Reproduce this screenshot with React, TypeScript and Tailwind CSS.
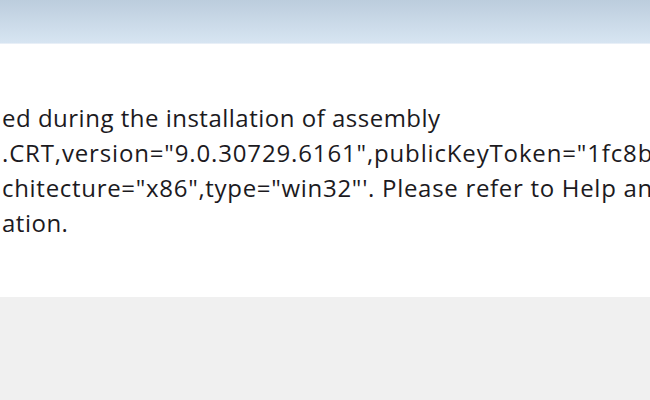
import { JSX } from "react"

const lines = [
    { text: "ed during the installation of assembly", track: "tracking-[0.5px]" },
    { text: ".CRT,version=\"9.0.30729.6161\",publicKeyToken=\"1fc8b3b9a1e18e3b\"", track: "tracking-[0.85px]" },
    { text: "chitecture=\"x86\",type=\"win32\"'. Please refer to Help and Support for more", track: "tracking-[0.7px]" },
    { text: "ation.", track: "tracking-[0.5px]" },
]

export default function App(): JSX.Element {
    return (
        <div id="dialog" className="w-[650px] h-[400px] flex flex-col overflow-hidden bg-white">
            <TitleBar />
            <Message />
            <ButtonArea />
        </div>
    )
}

function TitleBar(): JSX.Element {
    return (
        <div className="h-[44px] shrink-0 flex flex-col">
            <div className="h-[43px] bg-gradient-to-b from-[#bccddd] to-[#d7e5f2]" />
            <div className="h-px bg-[#e8eff7]" />
        </div>
    )
}

function Message(): JSX.Element {
    return (
        <div className="h-[253px] shrink-0 pt-[56px] pl-[2px] overflow-hidden text-[#1c1a1e] font-['Open_Sans',sans-serif] text-[24px] leading-[35px]">
            {lines.map((line, i) => (
                <div key={i} className={`whitespace-nowrap ${line.track}`}>{line.text}</div>
            ))}
        </div>
    )
}

function ButtonArea(): JSX.Element {
    return <div className="flex-1 bg-[#f0f0f0]" />
}
